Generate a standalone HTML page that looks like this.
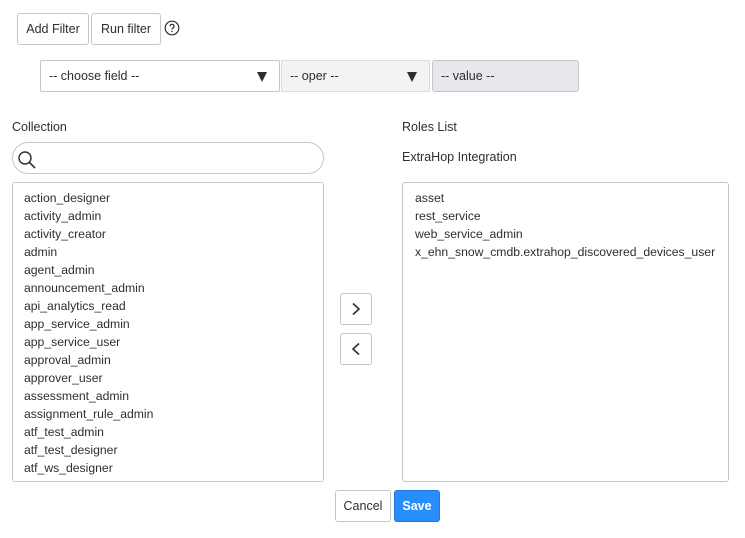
<!DOCTYPE html>
<html><head><meta charset="utf-8"><style>
*{box-sizing:border-box;margin:0;padding:0}
body{width:745px;height:538px;background:#fff;font-family:"Liberation Sans",sans-serif;font-size:12px;color:#2e2e2e;position:relative;overflow:hidden}
.a{position:absolute}
.btn{position:absolute;border:1px solid #c4c6c9;border-radius:3px;background:#fff;display:flex;align-items:center;justify-content:center;font-size:12.5px;color:#2e2e2e}
.sel{position:absolute;border:1px solid #c4c6c9;display:flex;align-items:center;padding-left:8px;font-size:12.5px}
.tri{position:absolute;right:12px;top:11px;width:0;height:0;border-left:5.5px solid transparent;border-right:5.5px solid transparent;border-top:10px solid #2e2e2e}
.box{position:absolute;border:1px solid #c4c6c9;border-radius:3px;overflow:hidden;padding:7px 0 0 11px}
.box div{height:18px;line-height:16px;font-size:12.2px;color:#2e2e2e}
</style></head><body>
<div class="btn" style="left:17px;top:13px;width:72px;height:32px">Add Filter</div>
<div class="btn" style="left:91px;top:13px;width:70px;height:32px">Run filter</div>
<svg class="a" style="left:164px;top:20px" width="16" height="16" viewBox="0 0 16 16"><circle cx="8" cy="8" r="6.8" fill="none" stroke="#2e2e2e" stroke-width="1.2"/><path d="M6 6.3a2 2 0 1 1 2.8 1.8c-.6.3-.8.6-.8 1.3" fill="none" stroke="#2e2e2e" stroke-width="1.2"/><circle cx="8" cy="11.4" r=".8" fill="#2e2e2e"/></svg>
<div class="sel" style="left:40px;top:60px;width:240px;height:32px;border-radius:2px">-- choose field --<span class="tri"></span></div>
<div class="sel" style="left:281px;top:60px;width:149px;height:32px;background:#f3f3f3;border-color:#dcdcdc">-- oper --<span class="tri"></span></div>
<div class="sel" style="left:432px;top:60px;width:147px;height:32px;background:#e6e8eb;border-color:#c4c6c9;border-radius:3px">-- value --</div>
<div class="a" style="left:12px;top:120px;font-size:12.5px">Collection</div>
<div class="a" style="left:402px;top:120px;font-size:12.5px">Roles List</div>
<div class="a" style="left:402px;top:150px;font-size:12.5px">ExtraHop Integration</div>
<div class="a" style="left:12px;top:142px;width:312px;height:32px;border:1px solid #c4c6c9;border-radius:16px"></div>
<svg class="a" style="left:16px;top:149px" width="22" height="22" viewBox="0 0 22 22"><circle cx="9" cy="9" r="6" fill="none" stroke="#2e2e2e" stroke-width="1.4"/><path d="M13.3 13.3L19 19" stroke="#2e2e2e" stroke-width="1.6"/></svg>
<div class="box" style="left:12px;top:182px;width:312px;height:300px">
<div>action_designer</div><div>activity_admin</div><div>activity_creator</div><div>admin</div><div>agent_admin</div><div>announcement_admin</div><div>api_analytics_read</div><div>app_service_admin</div><div>app_service_user</div><div>approval_admin</div><div>approver_user</div><div>assessment_admin</div><div>assignment_rule_admin</div><div>atf_test_admin</div><div>atf_test_designer</div><div>atf_ws_designer</div><div>itil</div>
</div>
<div class="box" style="left:402px;top:182px;width:327px;height:300px;padding-left:12px">
<div>asset</div><div>rest_service</div><div>web_service_admin</div><div>x_ehn_snow_cmdb.extrahop_discovered_devices_user</div>
</div>
<div class="btn" style="left:340px;top:293px;width:32px;height:32px"><svg width="12" height="14" viewBox="0 0 12 14"><path d="M3 1.5L9 7L3 12.5" fill="none" stroke="#2e2e2e" stroke-width="1.6"/></svg></div>
<div class="btn" style="left:340px;top:333px;width:32px;height:32px"><svg width="12" height="14" viewBox="0 0 12 14"><path d="M9 1.5L3 7L9 12.5" fill="none" stroke="#2e2e2e" stroke-width="1.6"/></svg></div>
<div class="btn" style="left:335px;top:490px;width:56px;height:32px">Cancel</div>
<div class="btn" style="left:394px;top:490px;width:46px;height:32px;background:#278efc;border-color:#1f78d8;color:#fff;font-weight:bold">Save</div>
</body></html>
